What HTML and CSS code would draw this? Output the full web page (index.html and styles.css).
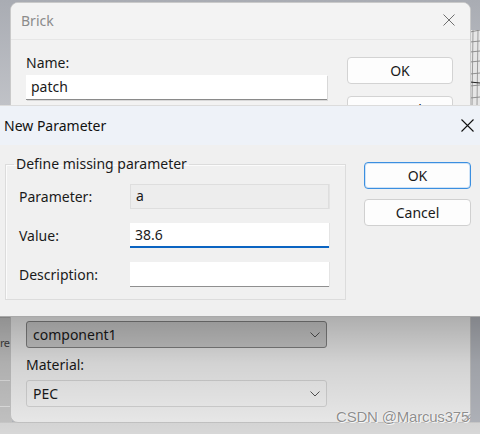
FILE: index.html
```html
<!DOCTYPE html>
<html>
<head>
<meta charset="utf-8">
<link rel="stylesheet" href="styles.css">
</head>
<body>
<div class="desktop">
  <div class="bg-left-top"></div>
  <div class="bg-left-bottom"><span class="bg-text">re</span></div>
  <svg class="bg-grid" width="10" height="76" viewBox="0 0 10 76">
    <path d="M0 2 L10 0 M0 12 L10 11 M0 22 L10 21 M0 32 L10 31 M0 44 L10 43 M0 56 L10 55 M0 68 L10 67" stroke="#7a7a7a" stroke-width="0.8" fill="none"/>
    <path d="M3 0 L2 76 M8 0 L7 76" stroke="#8a8a8a" stroke-width="0.8" fill="none"/>
    <path d="M0 52 L10 53" stroke="#222" stroke-width="1.2" fill="none"/>
  </svg>
  <div class="bg-bottom"></div>

  <div class="win brick">
    <div class="brick-title">
      <span>Brick</span>
      <svg class="x-gray" width="12" height="12" viewBox="0 0 12 12"><path d="M0.5 0.5 L11.5 11.5 M11.5 0.5 L0.5 11.5" stroke="#6f6f6f" stroke-width="1" fill="none"/></svg>
    </div>
    <div class="brick-body">
      <div class="brick-left">
        <label class="b-label">Name:</label>
        <div class="b-input">patch</div>
        <div class="b-hidden"></div>
        <div class="b-select dark"><span>component1</span><svg width="10" height="6" viewBox="0 0 10 6"><path d="M0.5 0.5 L5 5 L9.5 0.5" stroke="#555" stroke-width="1" fill="none"/></svg></div>
        <label class="b-label mat">Material:</label>
        <div class="b-select light"><span>PEC</span><svg width="10" height="6" viewBox="0 0 10 6"><path d="M0.5 0.5 L5 5 L9.5 0.5" stroke="#555" stroke-width="1" fill="none"/></svg></div>
      </div>
      <div class="brick-right">
        <div class="b-btn">OK</div>
        <div class="b-btn">Cancel</div>
      </div>
    </div>
  </div>

  <div class="shade"></div>

  <div class="win param">
    <div class="p-title">
      <span>New Parameter</span>
      <svg class="x-black" width="13" height="13" viewBox="0 0 13 13"><path d="M0.5 0.5 L12.5 12.5 M12.5 0.5 L0.5 12.5" stroke="#111" stroke-width="1.1" fill="none"/></svg>
    </div>
    <div class="p-body">
      <fieldset class="group">
        <legend>Define missing parameter</legend>
        <div class="rows">
          <span class="p-label">Parameter:</span><div class="field ro">a</div>
          <span class="p-label">Value:</span><div class="field focus">38.6</div>
          <span class="p-label">Description:</span><div class="field"></div>
        </div>
      </fieldset>
      <div class="p-buttons">
        <div class="p-btn default">OK</div>
        <div class="p-btn">Cancel</div>
      </div>
    </div>
  </div>

  <div class="watermark">CSDN @Marcus375</div>
  <svg class="grip" width="9" height="9" viewBox="0 0 9 9"><path d="M8.5 1 L1 8.5 M8.5 4.5 L4.5 8.5" stroke="#9a9a9a" stroke-width="1" fill="none"/></svg>
</div>
</body>
</html>
```

FILE: styles.css
```css
html, body {
  margin: 0;
  padding: 0;
}
body {
  width: 480px;
  height: 434px;
  overflow: hidden;
  font-family: "Noto Sans", "Open Sans", sans-serif;
  font-size: 14px;
  color: #1a1a1a;
}
.desktop {
  position: relative;
  width: 480px;
  height: 434px;
  background: #b6b9c0;
  overflow: hidden;
}
.bg-left-top {
  position: absolute;
  left: 0; top: 0;
  width: 480px; height: 120px;
  background: linear-gradient(to bottom, #a9acb3, #c3c5ca);
}
.bg-grid {
  position: absolute;
  left: 470px; top: 30px;
  background: #e6e6e6;
}
.bg-left-bottom {
  position: absolute;
  left: 0; top: 317px;
  width: 12px; height: 110px;
  background: #c9c9c9;
  border-top: 1px solid #b3b3b3;
}
.bg-left-bottom::before,
.bg-left-bottom::after {
  content: "";
  position: absolute;
  left: 0; width: 12px;
  border-top: 1px solid #e6e6e6;
}
.bg-left-bottom::before { top: 62px; }
.bg-left-bottom::after { top: 88px; }
.bg-text {
  position: absolute;
  left: 0; top: 17px;
  font-size: 11px;
  letter-spacing: -0.5px;
  color: #444;
}
.bg-bottom {
  position: absolute;
  left: 0; top: 422px;
  width: 480px; height: 12px;
  background: #dedede;
  border-top: 1px solid #cfcfcf;
}

.win {
  position: absolute;
  box-sizing: border-box;
}

/* Brick dialog */
.brick {
  left: 10px;
  top: 2px;
  width: 461px;
  height: 421px;
  background: #f2f2f2;
  border: 1px solid #c9c9c9;
  border-radius: 8px;
  overflow: hidden;
}
.brick-title {
  height: 36px;
  border-bottom: 1px solid #e6e6e6;
  background: #f3f3f3;
  display: flex;
  align-items: center;
  justify-content: space-between;
  padding: 0 15px 0 10px;
  color: #8b8b8b;
  font-size: 14px;
}
.brick-title span { margin-top: -2px; }
.x-gray { margin-top: -3px; }
.brick-body {
  display: flex;
  padding: 0 0 0 15px;
}
.brick-left {
  width: 301px;
  display: flex;
  flex-direction: column;
}
.b-label {
  height: 20px;
  line-height: 20px;
  margin-top: 13px;
}
.b-input {
  margin-top: 2px;
  height: 25px;
  box-sizing: border-box;
  background: #fff;
  border-bottom: 1px solid #8a8a8a;
  box-shadow: 1px 1px 0 #d8d8d8;
  padding: 0 5px;
  line-height: 24px;
}
.b-hidden {
  height: 221px;
}
.b-select {
  height: 27px;
  box-sizing: border-box;
  border-radius: 3px;
  display: flex;
  align-items: center;
  justify-content: space-between;
  padding: 0 6px 0 6px;
}
.b-select.dark {
  background: #d0d0d0;
  border: 1px solid #858585;
}
.b-select.light {
  background: #f4f4f4;
  border: 1px solid #d6d6d6;
}
.b-label.mat {
  margin-top: 7px;
  margin-bottom: 5px;
}
.brick-right {
  margin-left: 20px;
  padding-top: 17px;
  display: flex;
  flex-direction: column;
  gap: 12px;
}
.b-btn {
  width: 106px;
  height: 27px;
  box-sizing: border-box;
  background: #fdfdfd;
  border: 1px solid #d3d3d3;
  border-radius: 4px;
  text-align: center;
  line-height: 25px;
}

.shade {
  position: absolute;
  left: 0; top: 317px;
  width: 480px; height: 117px;
  background: linear-gradient(to bottom, rgba(0,0,0,0.28), rgba(0,0,0,0.13) 40%, rgba(0,0,0,0.03) 100%);
}

/* New Parameter dialog */
.param {
  left: 0;
  top: 105px;
  width: 480px;
  height: 212px;
  background: #f0f0f0;
  border-top: 1px solid #dcdcdc;
  border-bottom: 1px solid #a9a9a9;
}
.p-title {
  height: 39px;
  background: #eef2f8;
  display: flex;
  align-items: center;
  justify-content: space-between;
  padding: 0 6px 0 4px;
  font-size: 14px;
  color: #111;
}
.p-body {
  display: flex;
  align-items: flex-start;
  padding: 10px 0 0 5px;
}
.group {
  margin: 0;
  width: 341px;
  box-sizing: border-box;
  border: 1px solid #dcdcdc;
  box-shadow: inset 1px 1px 0 #fbfbfb;
  padding: 11px 15px 12px 13px;
  min-inline-size: 0;
}
.group legend {
  padding: 0 2px;
  margin-left: -5px;
  line-height: 18px;
  color: #1a1a1a;
}
.rows {
  display: grid;
  grid-template-columns: 111px 199px;
  grid-auto-rows: 25px;
  row-gap: 14px;
  align-items: center;
}
.p-label {
  line-height: 25px;
}
.field {
  height: 25px;
  box-sizing: border-box;
  background: #fff;
  border-bottom: 1px solid #8f8f8f;
  box-shadow: 1px 0 0 #e4e4e4;
  padding: 0 5px;
  line-height: 24px;
}
.field.ro {
  background: #ededed;
  border: 1px solid #dedede;
  line-height: 22px;
}
.field.focus {
  border-bottom: 2px solid #0a64c2;
  line-height: 23px;
}
.p-buttons {
  margin-left: 18px;
  padding-top: 7px;
  display: flex;
  flex-direction: column;
  gap: 10px;
}
.p-btn {
  width: 107px;
  height: 27px;
  box-sizing: border-box;
  background: #fdfdfd;
  border: 1px solid #d0d0d0;
  border-radius: 4px;
  text-align: center;
  line-height: 25px;
}
.p-btn.default {
  border: 1px solid #3b8fe0;
  box-shadow: inset 0 0 0 1px #cfe3f7;
}

.watermark {
  position: absolute;
  left: 336px;
  top: 408px;
  font-family: "Liberation Sans", Arial, sans-serif;
  font-size: 15px;
  color: #8e8e8e;
  text-shadow: 0 0 1px #fff, 0 0 1px #fff, 1px 1px 0 #f4f4f4;
  letter-spacing: -0.2px;
}
.grip {
  position: absolute;
  left: 462px;
  top: 413px;
}
```
